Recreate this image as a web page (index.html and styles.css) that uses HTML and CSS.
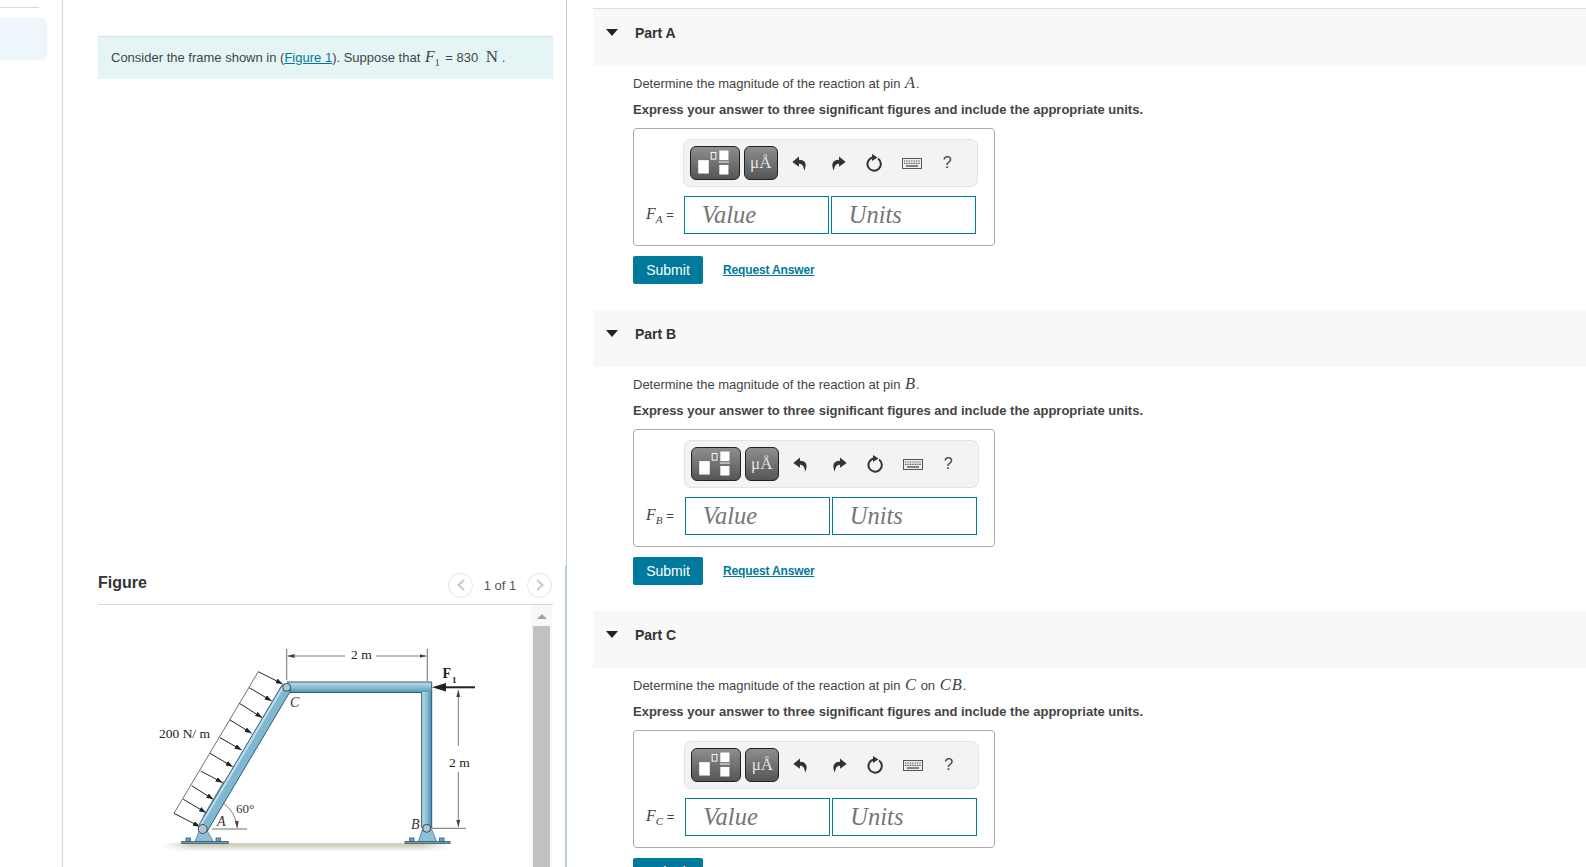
FILE: index.html
```html
<!DOCTYPE html>
<html lang="en">
<head>
<meta charset="utf-8">
<title>Frame problem</title>
<link rel="stylesheet" href="styles.css">
</head>
<body>
<svg class="defs" width="0" height="0" aria-hidden="true">
  <defs>
    <linearGradient id="steelH" x1="0" y1="0" x2="0" y2="1"><stop offset="0" stop-color="#c4dde8"/><stop offset="0.6" stop-color="#7fb8d0"/><stop offset="1" stop-color="#4f93b0"/></linearGradient>
    <linearGradient id="steelV" x1="0" y1="0" x2="1" y2="0"><stop offset="0" stop-color="#c4dde8"/><stop offset="0.6" stop-color="#7fb8d0"/><stop offset="1" stop-color="#3f87a6"/></linearGradient>
    <linearGradient id="ground" x1="0" y1="0" x2="1" y2="0"><stop offset="0" stop-color="#fff"/><stop offset="0.1" stop-color="#d2d0bb"/><stop offset="0.9" stop-color="#d2d0bb"/><stop offset="1" stop-color="#fff"/></linearGradient>
    <linearGradient id="groundFade" x1="0" y1="0" x2="0" y2="1"><stop offset="0.3" stop-color="#fff" stop-opacity="0"/><stop offset="1" stop-color="#fff" stop-opacity="0.9"/></linearGradient>
    <marker id="tip" viewBox="0 0 7 5" refX="7" refY="2.500" markerWidth="7" markerHeight="5" orient="auto" markerUnits="userSpaceOnUse"><path d="M0 0L7 2.500L0 5Z" fill="#222"/></marker>
    <marker id="dtip" viewBox="0 0 7 4" refX="7" refY="2" markerWidth="7" markerHeight="4" orient="auto" markerUnits="userSpaceOnUse"><path d="M0 0L7 2L0 4Z" fill="#444"/></marker>
    <symbol id="i-templates" viewBox="0 0 50 34">
      <rect x="7.500" y="14" width="11" height="14" fill="#fff"/>
      <rect x="21" y="6" width="5" height="7" fill="none" stroke="#fff" stroke-width="1"/>
      <rect x="29.500" y="4" width="9.500" height="10" fill="#fff"/>
      <rect x="29" y="15.500" width="10.500" height="1" fill="#fff"/>
      <rect x="29.500" y="19" width="9.500" height="10" fill="#fff"/>
    </symbol>
    <symbol id="i-undo" viewBox="0 0 14 14">
      <path d="M6.500 0.500L0.300 5.500L6.500 10V7.300C9.500 7.300 11 9.500 11.300 13.800C13.800 9 13.500 3.600 6.500 3.600Z" fill="#333"/>
    </symbol>
    <symbol id="i-reset" viewBox="0 0 18 18">
      <path d="M13 4.500A6.700 6.700 0 1 1 7.500 3.500" fill="none" stroke="#333" stroke-width="2"/>
      <path d="M7 0L12.500 3.500L7 7Z" fill="#333"/>
    </symbol>
    <symbol id="i-kbd" viewBox="0 0 20 11">
      <rect x="0.500" y="0.500" width="19" height="10" fill="#eee" stroke="#555"/>
      <path d="M2 3H18M2 5.300H18" stroke="#555" stroke-width="1.200" stroke-dasharray="1 .7"/>
      <path d="M4 8H16" stroke="#555" stroke-width="1.400"/>
    </symbol>
    <symbol id="i-prev" viewBox="0 0 12 14"><path d="M9 2L3.500 7L9 12" fill="none" stroke="#c8c8c8" stroke-width="2"/></symbol>
    <symbol id="i-next" viewBox="0 0 12 14"><path d="M3 2L8.500 7L3 12" fill="none" stroke="#c8c8c8" stroke-width="2"/></symbol>
  </defs>
</svg>

<aside class="rail">
  <div class="rail-line"></div>
  <div class="rail-tab"></div>
</aside>

<section class="left">
  <div class="intro">Consider the frame shown in (<a class="link" href="#">Figure 1</a>). Suppose that <span class="math"><i>F</i><sub>1</sub></span> = 830 <span class="unit">N</span> .</div>
  <div class="fig-head">
    <h2 class="fig-title">Figure</h2>
    <div class="pager">
      <span class="pager-btn"><svg width="12" height="14"><use href="#i-prev"/></svg></span>
      <span class="pager-count">1 of 1</span>
      <span class="pager-btn"><svg width="12" height="14"><use href="#i-next"/></svg></span>
    </div>
  </div>
  <div class="fig-body">
    <svg class="diagram" width="433" height="261" viewBox="98 605 433 261" role="img" aria-label="Frame diagram">
      <rect x="163" y="843" width="287" height="8" fill="url(#ground)"/>
      <rect x="163" y="843" width="287" height="8" fill="url(#groundFade)"/>
      <g fill="none" stroke="#333" stroke-width="0.700">
        <path d="M174 813.300L258.300 671.700"/>
        <path d="M286.700 680V649M427.300 681V649"/>
        <path d="M432 828.300H466"/>
        <path d="M212 829H247"/>
      </g>
      <g stroke="#222" stroke-width="1" fill="none">
        <path d="M174 813.300L200 826.700" marker-end="url(#tip)"/>
        <path d="M183.300 799.300L206 812.700" marker-end="url(#tip)"/>
        <path d="M191.700 785.700L213.300 799.300" marker-end="url(#tip)"/>
        <path d="M200.700 771L222.700 782.700" marker-end="url(#tip)"/>
        <path d="M210 753.300L232.700 766.700" marker-end="url(#tip)"/>
        <path d="M220 737.700L241.700 750" marker-end="url(#tip)"/>
        <path d="M230 720L251.700 733.300" marker-end="url(#tip)"/>
        <path d="M239.300 703.300L262.300 717.700" marker-end="url(#tip)"/>
        <path d="M249.300 687.700L271.700 701" marker-end="url(#tip)"/>
        <path d="M258.300 671.700L282.700 684" marker-end="url(#tip)"/>
      </g>
      <g stroke="#444" stroke-width="0.700" fill="none">
        <path d="M345 656H287.500" marker-end="url(#dtip)"/>
        <path d="M376 656H426.500" marker-end="url(#dtip)"/>
        <path d="M458.300 746V690" marker-end="url(#dtip)"/>
        <path d="M458.300 772V827" marker-end="url(#dtip)"/>
        <path d="M221.700 801.700Q236 812 237.300 828" marker-end="url(#dtip)"/>
      </g>
      <rect x="287" y="682" width="144.500" height="10.500" fill="url(#steelH)"/>
      <rect x="421.700" y="692" width="10" height="136" fill="url(#steelV)"/>
      <path d="M287 682H431.700V828M421.700 828V692.500H287" fill="none" stroke="#36596b" stroke-width="1"/>
      <path d="M198.300 826L282.300 684.700L291 690L207.100 831.500Z" fill="#7fb8d0" stroke="#2e5f78" stroke-width="1"/>
      <path d="M200.500 825.500L284 685.500" stroke="#c4dde8" stroke-width="2"/>
      <path d="M203 817L224 781" stroke="#2e5f78" stroke-width="0.700"/>
      <g fill="#8fc0d6" stroke="#3e6a80" stroke-width="0.700">
        <path d="M195 841.500L200 829H206L213.300 841.500Z"/>
        <path d="M418.300 841.500L423 828H431L436.700 841.500Z"/>
      </g>
      <g fill="#6ea3bb" stroke="#33566a" stroke-width="0.800">
        <rect x="181.700" y="841.500" width="46.600" height="2"/>
        <rect x="405" y="841.500" width="45" height="2"/>
        <rect x="186" y="838" width="4.500" height="3.500"/>
        <rect x="216" y="838" width="4.500" height="3.500"/>
        <rect x="409.500" y="838" width="4.500" height="3.500"/>
        <rect x="439.500" y="838" width="4.500" height="3.500"/>
      </g>
      <g fill="#b9c4ca" stroke="#2e4e60" stroke-width="1">
        <circle cx="286.700" cy="687.300" r="4"/>
        <circle cx="202.700" cy="829" r="4.500"/>
        <circle cx="426.700" cy="828.300" r="4"/>
      </g>
      <path d="M475 687.300H445" stroke="#222" stroke-width="2"/>
      <path d="M432 687.300L446 683V691.500Z" fill="#222"/>
      <g class="fig-text">
        <text x="351" y="659">2 m</text>
        <text x="449" y="767">2 m</text>
        <text x="159" y="738">200 N/ m</text>
        <text x="236" y="813" class="fig-deg">60°</text>
        <text x="290" y="707" class="fig-it">C</text>
        <text x="217" y="826" class="fig-it">A</text>
        <text x="411" y="829" class="fig-it">B</text>
        <text x="442.500" y="678" class="fig-bold">F</text>
        <text x="452" y="683" class="fig-sub">1</text>
      </g>
    </svg>
    <div class="scrollbar">
      <div class="scroll-arrow"></div>
      <div class="scroll-thumb"></div>
    </div>
  </div>
</section>

<main class="right">
  <section class="part">
    <header class="part-head"><span class="caret"></span><span class="part-name">Part A</span></header>
    <p class="desc">Determine the magnitude of the reaction at pin <span class="var">A</span>.</p>
    <p class="ask">Express your answer to three significant figures and include the appropriate units.</p>
    <div class="answer">
      <div class="toolbar">
        <span class="tool-btn tool-templates"><svg width="50" height="34"><use href="#i-templates"/></svg></span>
        <span class="tool-btn tool-mu">μÅ</span>
        <svg class="ic ic-undo" width="15" height="15"><use href="#i-undo"/></svg>
        <svg class="ic ic-redo" width="15" height="15"><use href="#i-undo"/></svg>
        <svg class="ic ic-reset" width="18" height="18"><use href="#i-reset"/></svg>
        <svg class="ic ic-kbd" width="20" height="11"><use href="#i-kbd"/></svg>
        <span class="ic-help">?</span>
      </div>
      <label class="lbl lbl-a"><i>F<sub>A</sub></i> =</label>
      <div class="inputs"><span class="field">Value</span><span class="field">Units</span></div>
    </div>
    <div class="actions"><button class="submit">Submit</button><a class="link req" href="#">Request Answer</a></div>
  </section>

  <section class="part">
    <header class="part-head"><span class="caret"></span><span class="part-name">Part B</span></header>
    <p class="desc">Determine the magnitude of the reaction at pin <span class="var">B</span>.</p>
    <p class="ask">Express your answer to three significant figures and include the appropriate units.</p>
    <div class="answer">
      <div class="toolbar">
        <span class="tool-btn tool-templates"><svg width="50" height="34"><use href="#i-templates"/></svg></span>
        <span class="tool-btn tool-mu">μÅ</span>
        <svg class="ic ic-undo" width="15" height="15"><use href="#i-undo"/></svg>
        <svg class="ic ic-redo" width="15" height="15"><use href="#i-undo"/></svg>
        <svg class="ic ic-reset" width="18" height="18"><use href="#i-reset"/></svg>
        <svg class="ic ic-kbd" width="20" height="11"><use href="#i-kbd"/></svg>
        <span class="ic-help">?</span>
      </div>
      <label class="lbl"><i>F<sub>B</sub></i> =</label>
      <div class="inputs"><span class="field">Value</span><span class="field">Units</span></div>
    </div>
    <div class="actions"><button class="submit">Submit</button><a class="link req" href="#">Request Answer</a></div>
  </section>

  <section class="part">
    <header class="part-head"><span class="caret"></span><span class="part-name">Part C</span></header>
    <p class="desc">Determine the magnitude of the reaction at pin <span class="var">C</span> on <span class="var">CB</span>.</p>
    <p class="ask">Express your answer to three significant figures and include the appropriate units.</p>
    <div class="answer">
      <div class="toolbar">
        <span class="tool-btn tool-templates"><svg width="50" height="34"><use href="#i-templates"/></svg></span>
        <span class="tool-btn tool-mu">μÅ</span>
        <svg class="ic ic-undo" width="15" height="15"><use href="#i-undo"/></svg>
        <svg class="ic ic-redo" width="15" height="15"><use href="#i-undo"/></svg>
        <svg class="ic ic-reset" width="18" height="18"><use href="#i-reset"/></svg>
        <svg class="ic ic-kbd" width="20" height="11"><use href="#i-kbd"/></svg>
        <span class="ic-help">?</span>
      </div>
      <label class="lbl"><i>F<sub>C</sub></i> =</label>
      <div class="inputs"><span class="field">Value</span><span class="field">Units</span></div>
    </div>
    <div class="actions"><button class="submit">Submit</button><a class="link req" href="#">Request Answer</a></div>
  </section>
</main>
</body>
</html>
```

FILE: styles.css
```css
* { box-sizing: border-box; }
html, body { height: 867px; overflow: hidden; }
body {
  margin: 0;
  display: flex;
  background: #fff;
  color: #444;
  font: 13px/20px "Liberation Sans", Arial, sans-serif;
}
.defs { position: absolute; }

/* left rail */
.rail { flex: 0 0 63px; border-right: 1px solid #d8d8d8; padding-top: 7px; }
.rail-line { width: 39px; height: 1px; background: #d9d9d9; }
.rail-tab { width: 47px; height: 42px; margin-top: 10px; background: #edf6fb; border-radius: 0 5px 5px 0; }

/* problem pane */
.left { flex: 0 0 503px; padding: 36px 13px 0 35px; display: flex; flex-direction: column; }
.intro {
  height: 43px;
  border-top: 1px solid #d9dfe0;
  background: #e5f5f6;
  padding: 10px 13px;
  font-size: 13px;
  white-space: nowrap;
}
.link { color: #007a9c; text-decoration: underline; }
.math { font-family: "Liberation Serif", serif; font-size: 16px; margin: 0 2px 0 1px; }
.math sub { font-size: 10px; line-height: 0; font-style: normal; }
.unit { font-family: "Liberation Serif", serif; font-size: 17px; margin-left: 4px; }

.fig-head {
  margin-top: 489px;
  height: 38px;
  border-bottom: 1px solid #d9d9d9;
  display: flex;
  align-items: flex-start;
  justify-content: space-between;
}
.fig-title { margin: 0; font-size: 16px; line-height: 30px; font-weight: 700; color: #333; }
.pager { display: flex; align-items: center; gap: 8px; padding-top: 5px; font-size: 13px; margin-right: 1px; }
.pager-btn {
  width: 25px; height: 25px;
  border: 1px solid #e6e6e6; border-radius: 50%;
  display: flex; align-items: center; justify-content: center;
}
.pager-count { width: 38px; margin-top: 2px; text-align: center; color: #555; white-space: nowrap; }
.fig-body { display: flex; height: 262px; }
.diagram { display: block; flex: 0 0 433px; }
.fig-text text { font: 13.500px "Liberation Serif", serif; fill: #222; }
.fig-text .fig-it { font-style: italic; font-size: 14px; fill: #333; }
.fig-text .fig-deg { fill: #333; font-size: 13px; }
.fig-text .fig-bold { font-weight: 700; font-size: 14px; }
.fig-text .fig-sub { font-size: 9px; font-weight: 700; }
.scrollbar { flex: 0 0 21px; padding: 0 2px; background: #f8f8f8; }
.scroll-arrow {
  width: 0; height: 0;
  margin: 9px auto 7px;
  border-left: 5px solid transparent;
  border-right: 5px solid transparent;
  border-bottom: 5px solid #a3a3a3;
}
.scroll-thumb { height: 300px; background: #c1c1c1; }

/* parts */
.right { flex: 1; min-width: 0; border-left: 1px solid #b9cde0; padding: 8px 0 0 26px; position: relative; }
.right::before {
  content: "";
  position: absolute;
  left: -2px; top: 566px; bottom: 0;
  width: 2px;
  background: #b9cde0;
}
.part { margin-bottom: 26px; }
.part:first-child { border-top: 1px solid #ddd; }
.part-head { height: 57px; background: #f8f8f8; display: flex; align-items: flex-start; padding: 14px 0 0 13px; }
.caret {
  width: 0; height: 0;
  margin-top: 6px;
  border-left: 6px solid transparent;
  border-right: 6px solid transparent;
  border-top: 7px solid #222;
}
.part-name { margin-left: 17px; font-weight: 700; color: #333; font-size: 14px; }
.desc { margin: 7px 0 0 40px; height: 20px; white-space: nowrap; }
.ask { margin: 7px 0 0 40px; height: 20px; font-weight: 700; white-space: nowrap; }
.var { font-family: "Liberation Serif", serif; font-style: italic; font-size: 16.500px; letter-spacing: 1px; margin-left: 1px; }

.answer {
  width: 362px;
  margin: 8px 0 0 40px;
  border: 1px solid #aaa;
  border-radius: 4px;
  padding: 10px 0 11px 12px;
  display: grid;
  grid-template-columns: auto auto;
  justify-content: start;
  align-items: center;
  row-gap: 9px;
}
.toolbar {
  grid-column: 2;
  grid-row: 1;
  width: 295px;
  height: 48px;
  margin-left: -1px;
  background: #f3f3f3;
  border: 1px solid #e3e3e3;
  border-radius: 7px;
  display: flex;
  align-items: center;
  padding-left: 6px;
}
.tool-btn {
  display: flex; align-items: center; justify-content: center;
  height: 34px;
  background: linear-gradient(#8e8e8e, #555);
  border: 1px solid #222;
  border-radius: 6px;
  flex: none;
}
.tool-templates { width: 50px; }
.tool-mu {
  width: 34px; margin-left: 4px;
  font: 17px/34px "Liberation Serif", serif;
  color: #e2e2e2;
}
.ic { flex: none; display: block; }
.ic-undo { margin-left: 14px; }
.ic-redo { margin-left: 24px; transform: scaleX(-1); }
.ic-reset { margin-left: 19px; }
.ic-kbd { margin-left: 19px; }
.ic-help { margin-left: 21px; font-size: 16px; color: #444; }

.lbl { grid-column: 1; grid-row: 2; padding-right: 11px; font-size: 13px; white-space: nowrap; }
.lbl-a { padding-right: 10px; }
.lbl i { font: italic 16px "Liberation Serif", serif; }
.lbl sub { font-size: 11px; line-height: 0; }
.inputs { grid-column: 2; grid-row: 2; display: flex; gap: 2px; }
.field {
  width: 145px; height: 38px;
  border: 1px solid #007c9e;
  padding-left: 17px;
  font: italic 24.500px/36px "Liberation Serif", serif;
  color: #767676;
}
.actions { display: flex; align-items: center; margin: 10px 0 0 40px; height: 28px; }
.submit {
  width: 70px; height: 28px;
  border: 0; border-radius: 2px;
  background: #007a9c;
  color: #fff;
  font: 14px "Liberation Sans", Arial, sans-serif;
  padding: 0;
}
.req { margin-left: 20px; font-size: 12px; font-weight: 700; letter-spacing: -0.150px; }
```
